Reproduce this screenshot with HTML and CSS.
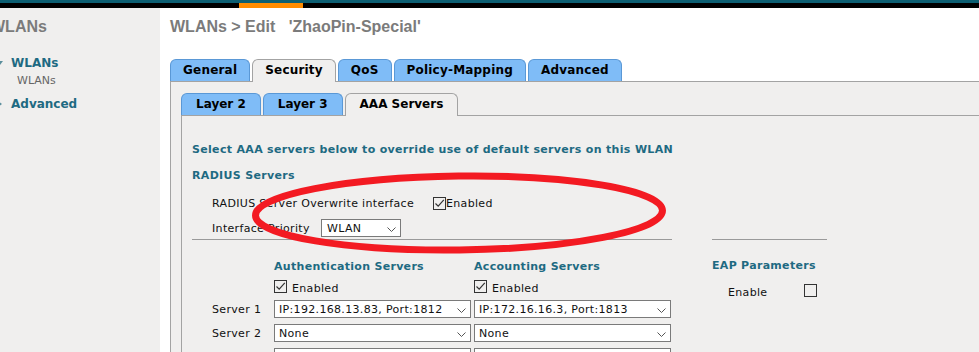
FILE: index.html
```html
<!DOCTYPE html>
<html lang="en">
<head>
<meta charset="utf-8">
<title>WLANs &gt; Edit</title>
<link rel="stylesheet" href="styles.css">
</head>
<body>
<div class="topbar"><div class="topbar-accent"></div></div>
<div class="layout">
  <aside class="sidebar">
    <h2 class="side-title">WLANs</h2>
    <ul class="side-nav">
      <li class="side-item"><span class="caret-down"></span>WLANs</li>
      <li class="side-sub">WLANs</li>
      <li class="side-item side-item-gap"><span class="caret-right"></span>Advanced</li>
    </ul>
  </aside>
  <main class="main">
    <h1 class="page-title">WLANs &gt; Edit&nbsp;&nbsp;&nbsp;'ZhaoPin-Special'</h1>
    <div class="tabs">
      <div class="tab">General</div>
      <div class="tab active">Security</div>
      <div class="tab">QoS</div>
      <div class="tab">Policy-Mapping</div>
      <div class="tab">Advanced</div>
    </div>
    <div class="panel">
      <div class="tabs sub">
        <div class="tab">Layer 2</div>
        <div class="tab">Layer 3</div>
        <div class="tab active">AAA Servers</div>
      </div>
      <div class="subpanel">
        <p class="lead">Select AAA servers below to override use of default servers on this WLAN</p>
        <h3 class="section-title">RADIUS Servers</h3>
        <div class="form-row first">
          <span class="form-label wide">RADIUS Server Overwrite interface</span>
          <span class="check"><svg viewBox="0 0 11 11" width="11" height="11"><polyline points="1.5,5.5 4.2,8.2 9.8,1.8" fill="none" stroke="#333" stroke-width="1.2"/></svg></span><span>Enabled</span>
        </div>
        <div class="form-row">
          <span class="form-label narrow">Interface Priority</span>
          <div class="select w80"><span>WLAN</span><svg class="chev" viewBox="0 0 9 5" width="9" height="5"><polyline points="0.5,0.5 4.5,4.5 8.5,0.5" fill="none" stroke="#555" stroke-width="1"/></svg></div>
        </div>
        <div class="columns">
          <div class="servers">
            <span></span>
            <span class="col-head">Authentication Servers</span>
            <span class="col-head">Accounting Servers</span>

            <span></span>
            <span class="check-label"><span class="check"><svg viewBox="0 0 11 11" width="11" height="11"><polyline points="1.5,5.5 4.2,8.2 9.8,1.8" fill="none" stroke="#333" stroke-width="1.2"/></svg></span><span class="check-text">Enabled</span></span>
            <span class="check-label"><span class="check"><svg viewBox="0 0 11 11" width="11" height="11"><polyline points="1.5,5.5 4.2,8.2 9.8,1.8" fill="none" stroke="#333" stroke-width="1.2"/></svg></span><span class="check-text">Enabled</span></span>

            <span class="srv-label">Server 1</span>
            <div class="select"><span>IP:192.168.13.83, Port:1812</span><svg class="chev" viewBox="0 0 9 5" width="9" height="5"><polyline points="0.5,0.5 4.5,4.5 8.5,0.5" fill="none" stroke="#555" stroke-width="1"/></svg></div>
            <div class="select"><span>IP:172.16.16.3, Port:1813</span><svg class="chev" viewBox="0 0 9 5" width="9" height="5"><polyline points="0.5,0.5 4.5,4.5 8.5,0.5" fill="none" stroke="#555" stroke-width="1"/></svg></div>

            <span class="srv-label">Server 2</span>
            <div class="select"><span>None</span><svg class="chev" viewBox="0 0 9 5" width="9" height="5"><polyline points="0.5,0.5 4.5,4.5 8.5,0.5" fill="none" stroke="#555" stroke-width="1"/></svg></div>
            <div class="select"><span>None</span><svg class="chev" viewBox="0 0 9 5" width="9" height="5"><polyline points="0.5,0.5 4.5,4.5 8.5,0.5" fill="none" stroke="#555" stroke-width="1"/></svg></div>

            <span class="srv-label">Server 3</span>
            <div class="select"><span>None</span><svg class="chev" viewBox="0 0 9 5" width="9" height="5"><polyline points="0.5,0.5 4.5,4.5 8.5,0.5" fill="none" stroke="#555" stroke-width="1"/></svg></div>
            <div class="select"><span>None</span><svg class="chev" viewBox="0 0 9 5" width="9" height="5"><polyline points="0.5,0.5 4.5,4.5 8.5,0.5" fill="none" stroke="#555" stroke-width="1"/></svg></div>
          </div>
          <div class="eap">
            <span class="col-head">EAP Parameters</span>
            <div class="eap-row">
              <span class="eap-label">Enable</span>
              <span class="check"></span>
            </div>
          </div>
        </div>
      </div>
    </div>
  </main>
</div>
<svg class="annotation" width="979" height="352" viewBox="0 0 979 352">
  <ellipse cx="459" cy="213" rx="203.5" ry="37" fill="none" stroke="#f31a22" stroke-width="7" transform="rotate(-0.7 459 213)"/>
</svg>
</body>
</html>
```
FILE: styles.css
```css
* { box-sizing: border-box; }
html, body { margin: 0; padding: 0; }
body {
  width: 979px;
  height: 352px;
  overflow: hidden;
  position: relative;
  background: #fff;
  color: #111;
  font-family: "DejaVu Sans", Verdana, sans-serif;
  font-size: 11px;
}

.topbar {
  height: 8px;
  background: #000;
  border-top: 3px solid #0d5f72;
}
.topbar-accent {
  margin-left: 239px;
  width: 64px;
  height: 5px;
  background: #ff8c00;
}

.layout {
  display: flex;
  height: 344px;
}

.sidebar {
  flex: none;
  width: 160px;
  background: #f0efee;
  overflow: hidden;
}
.side-title {
  margin: 9px 0 0 -10px;
  font: bold 16px/20px "Liberation Sans", Arial, sans-serif;
  color: #7b7b7b;
}
.side-nav {
  list-style: none;
  margin: 18px 0 0;
  padding: 0;
}
.side-item {
  display: flex;
  align-items: center;
  font-weight: bold;
  font-size: 12px;
  line-height: 16px;
  color: #1e6a82;
}
.side-item-gap { margin-top: 8px; }
.caret-down {
  width: 0;
  height: 0;
  margin-left: -3px;
  margin-right: 8px;
  border-left: 3px solid transparent;
  border-right: 3px solid transparent;
  border-top: 4px solid #5a8e9c;
}
.caret-right {
  width: 0;
  height: 0;
  margin-left: -2px;
  margin-right: 9px;
  border-top: 3px solid transparent;
  border-bottom: 3px solid transparent;
  border-left: 4px solid #5a8e9c;
}
.side-sub {
  margin-top: 3px;
  padding-left: 17px;
  font-size: 11px;
  line-height: 14px;
  color: #666;
}

.main {
  flex: 1;
  display: flex;
  flex-direction: column;
  padding-left: 10px;
  min-width: 0;
}
.page-title {
  margin: 9px 0 0;
  font: bold 16px/20px "Liberation Sans", Arial, sans-serif;
  color: #7b7b7b;
  white-space: nowrap;
}

.tabs {
  display: flex;
  align-items: flex-start;
  gap: 2px;
  height: 22px;
  margin-top: 22px;
}
.tabs.sub { margin-top: 0; }
.tab {
  height: 22px;
  padding: 0 12px;
  border: 1px solid #5a98d6;
  border-bottom: none;
  border-radius: 6px 6px 0 0;
  background: #7fbcf7;
  font-weight: bold;
  font-size: 12px;
  line-height: 20px;
  letter-spacing: 0.2px;
  color: #000;
  white-space: nowrap;
}
.tabs.sub .tab { padding: 0 14px; letter-spacing: 0; }
.tab.active {
  position: relative;
  z-index: 1;
  height: 23px;
  margin-bottom: -1px;
  background: #f0efee;
  border-color: #a3a3a3;
}

.panel {
  flex: 1;
  display: flex;
  flex-direction: column;
  padding: 11px 0 0 10px;
  background: #f0efee;
  border-top: 1px solid #a3a3a3;
  border-left: 1px solid #a3a3a3;
}
.subpanel {
  flex: 1;
  padding-left: 10px;
  border-top: 1px solid #a3a3a3;
  border-left: 1px solid #a3a3a3;
  letter-spacing: 0.33px;
}

.lead, .section-title, .col-head {
  font-weight: bold;
  font-size: 11px;
  line-height: 14px;
  color: #1e6a82;
  white-space: nowrap;
}
.lead { margin: 27px 0 0; letter-spacing: 0.32px; }
.section-title { margin: 12px 0 0; }
.col-head { letter-spacing: 0.3px; }

.form-row {
  display: flex;
  align-items: center;
  height: 18px;
  padding-left: 20px;
  margin-top: 7px;
  white-space: nowrap;
}
.form-row.first { margin-top: 11px; }
.form-label.wide { width: 221px; }
.form-label.narrow { width: 109px; }

.check {
  flex: none;
  display: inline-flex;
  align-items: center;
  justify-content: center;
  width: 13px;
  height: 13px;
  border: 1px solid #333;
}
.check svg { display: block; }

.select {
  display: flex;
  align-items: center;
  justify-content: space-between;
  height: 18px;
  padding: 0 4px 0 4px;
  border: 1px solid #7a7a7a;
  background: #fff;
  white-space: nowrap;
  overflow: hidden;
}
.select.w80 { width: 80px; padding-left: 5px; }
.chev { flex: none; margin-top: 2px; }

.columns {
  display: flex;
  gap: 40px;
  margin-top: 2px;
}
.servers {
  width: 480px;
  border-top: 1px solid #9a9a9a;
  padding-top: 19px;
  display: grid;
  grid-template-columns: 79px 197px 197px;
  column-gap: 3px;
  row-gap: 6px;
  grid-template-rows: 15px 14px 18px 18px 18px;
  align-items: center;
}
.check-label {
  display: flex;
  align-items: flex-start;
  gap: 5px;
  align-self: start;
}
.check-text { line-height: 15px; margin-top: 1px; }
.srv-label {
  padding-left: 20px;
  white-space: nowrap;
}

.eap {
  width: 115px;
  border-top: 1px solid #9a9a9a;
  padding-top: 19px;
}
.eap .col-head { display: block; }
.eap-row {
  display: flex;
  align-items: flex-start;
  margin-top: 11px;
  padding-left: 16px;
}
.eap-label {
  width: 76px;
  line-height: 18px;
}

.annotation {
  position: absolute;
  left: 0;
  top: 0;
  pointer-events: none;
}
```
